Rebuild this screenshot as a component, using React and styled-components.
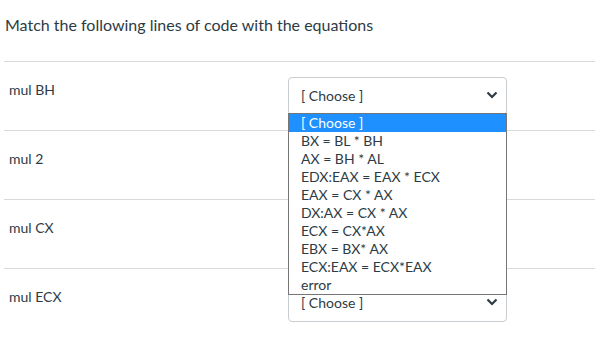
import React from "react"
import styled, { createGlobalStyle } from "styled-components"

const GlobalStyle = createGlobalStyle`
  body {
    margin: 0;
    background: #fff;
    font-family: Lato, "Open Sans", sans-serif;
    color: #2d3b45;
  }
`

const rows = ["mul BH", "mul 2", "mul CX", "mul ECX"]

const options = [
  "[ Choose ]",
  "BX = BL * BH",
  "AX = BH * AL",
  "EDX:EAX = EAX * ECX",
  "EAX = CX * AX",
  "DX:AX = CX * AX",
  "ECX = CX*AX",
  "EBX = BX* AX",
  "ECX:EAX = ECX*EAX",
  "error",
]

const Chevron = () => (
  <svg width="12" height="8" viewBox="0 0 12 8">
    <path d="M1.5 1.5 L6 6 L10.5 1.5" fill="none" stroke="#2d3b45" strokeWidth="2.2" />
  </svg>
)

const App = () => {
  return (
    <>
      <GlobalStyle />
      <Page>
        <Title>Match the following lines of code with the equations</Title>
        {rows.map((label, i) => (
          <Row key={label} last={i === rows.length - 1}>
            <Label>{label}</Label>
            <SelectWrap>
              <SelectBox>
                <span>[ Choose ]</span>
                <Chevron />
              </SelectBox>
              {i === 0 && (
                <DropList>
                  {options.map((o, j) => (
                    <Option key={o} active={j === 0}>
                      {o}
                    </Option>
                  ))}
                </DropList>
              )}
            </SelectWrap>
          </Row>
        ))}
      </Page>
    </>
  )
}

export default App

const Page = styled.div`
  padding-left: 4px;
`
const Title = styled.div`
  font-size: 16px;
  line-height: 20px;
  padding: 15px 0 26px 1px;
  border-bottom: 1px solid #d7dadc;
`
const Row = styled.div`
  display: flex;
  padding-top: 15px;
  box-sizing: border-box;
  height: 69px;
  border-bottom: 1px solid ${(p) => (p.last ? "transparent" : "#d7dadc")};
`
const Label = styled.div`
  width: 284px;
  padding: 5px 0 0 5px;
  box-sizing: border-box;
  font-size: 14px;
  line-height: 16px;
`
const SelectWrap = styled.div`
  position: relative;
  width: 219px;
`
const SelectBox = styled.div`
  height: 38px;
  box-sizing: border-box;
  border: 1px solid #c7cdd1;
  border-radius: 4px;
  display: flex;
  align-items: center;
  justify-content: space-between;
  padding: 0 8px 2px 12px;
  font-size: 14px;
  background: #fff;
`
const DropList = styled.div`
  position: absolute;
  top: 36px;
  left: 0;
  width: 219px;
  box-sizing: border-box;
  border: 1px solid #767676;
  background: #fff;
  z-index: 2;
`
const Option = styled.div`
  height: 18px;
  line-height: 18px;
  padding-left: 12px;
  font-size: 14px;
  color: ${(p) => (p.active ? "#fff" : "#2d3b45")};
  background: ${(p) => (p.active ? "#1e90ff" : "transparent")};
`
